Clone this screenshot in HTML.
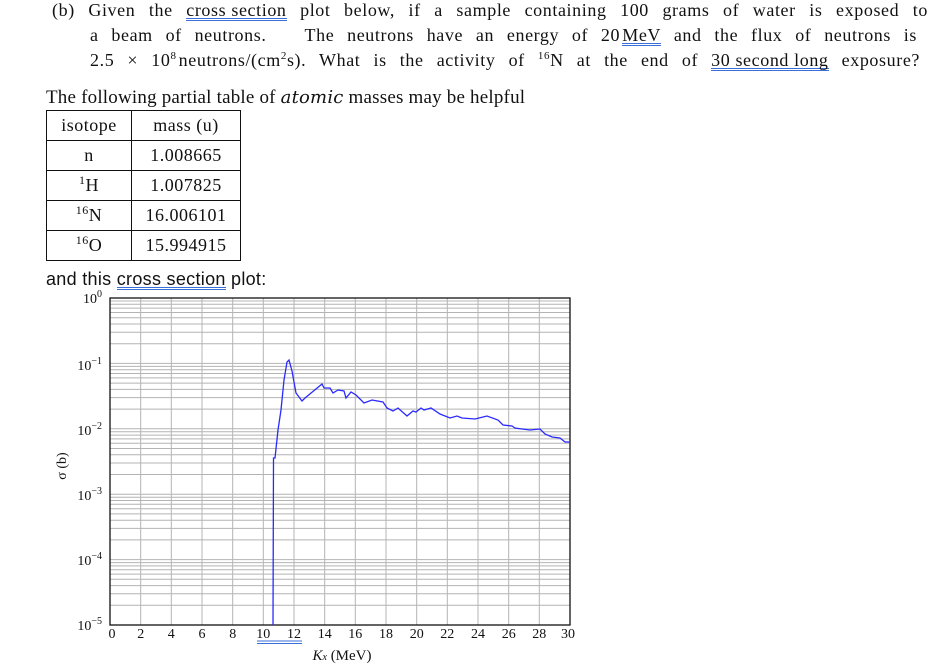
<!DOCTYPE html>
<html><head><meta charset="utf-8"><style>
body{margin:0;width:940px;height:671px;background:#fff;position:relative;overflow:hidden;font-family:"Liberation Serif",serif;color:#111}
.l{position:absolute;font-size:18px;letter-spacing:0.6px;white-space:nowrap;text-align:justify;text-align-last:justify;line-height:20px}
.u{border-bottom:3px double #3a6fd8;line-height:16px;display:inline-block}
sup{font-size:11px;vertical-align:7px;line-height:0}
table{position:absolute;left:46px;top:110px;border-collapse:collapse;font-size:18px;letter-spacing:0.5px}
td{border:1.5px solid #111;text-align:center;height:29px;padding:0}
</style></head><body>
<div class="l" style="left:52px;top:0;width:876px">(b) Given the <span class="u">cross section</span> plot below, if a sample containing 100 grams of water is exposed to</div>
<div class="l" style="left:90px;top:25px;width:827px">a beam of neutrons. &nbsp; The neutrons have an energy of 20&#8202;<span class="u">MeV</span> and the flux of neutrons is</div>
<div class="l" style="left:90px;top:50px;width:830px">2.5 × 10<sup>8</sup>&#8202;neutrons/(cm<sup>2</sup>s). What is the activity of <sup>16</sup>N at the end of <span class="u">30 second long</span> exposure?</div>
<div class="l" style="left:46px;top:88px;font-size:19px;letter-spacing:0.2px;text-align:left;text-align-last:left">The following partial table of <i style="font-family:'DejaVu Serif',serif;font-size:18px">atomic</i> masses may be helpful</div>
<table>
<tr><td style="width:84px">isotope</td><td style="width:108px">mass (u)</td></tr>
<tr><td>n</td><td>1.008665</td></tr>
<tr><td><sup style="font-size:12px">1</sup>H</td><td>1.007825</td></tr>
<tr><td><sup style="font-size:12px">16</sup>N</td><td>16.006101</td></tr>
<tr><td><sup style="font-size:12px">16</sup>O</td><td>15.994915</td></tr>
</table>
<div class="l" style="left:46px;top:269px;font-family:'Liberation Sans',sans-serif;letter-spacing:0.3px;text-align:left;text-align-last:left">and this <span class="u">cross section</span> plot:</div>
<svg width="940" height="671" style="position:absolute;left:0;top:0" font-family="Liberation Serif,serif">
<path fill="none" stroke="#b4b4b4" stroke-width="1" d="M140.7 298V625M171.3 298V625M202 298V625M232.7 298V625M263.3 298V625M294 298V625M324.7 298V625M355.3 298V625M386 298V625M416.7 298V625M447.3 298V625M478 298V625M508.7 298V625M539.3 298V625
M110 343.7H570M110 332.2H570M110 324H570M110 317.7H570M110 312.5H570M110 308.1H570M110 304.3H570M110 301H570M110 363.4H570
M110 409.1H570M110 397.6H570M110 389.4H570M110 383.1H570M110 377.9H570M110 373.5H570M110 369.7H570M110 366.4H570M110 428.8H570
M110 474.5H570M110 463H570M110 454.8H570M110 448.5H570M110 443.3H570M110 438.9H570M110 435.1H570M110 431.8H570M110 494.2H570
M110 539.9H570M110 528.4H570M110 520.2H570M110 513.9H570M110 508.7H570M110 504.3H570M110 500.5H570M110 497.2H570M110 559.6H570
M110 605.3H570M110 593.8H570M110 585.6H570M110 579.3H570M110 574.1H570M110 569.7H570M110 565.9H570M110 562.6H570"/>
<rect x="110" y="298" width="460" height="327" fill="none" stroke="#111" stroke-width="1.3"/>
<polyline fill="none" stroke="#2a2aff" stroke-width="1.3" points="273,625 273.5,458 275,458 278,430 281,410 284,380 287,362 289,360 292,371 296,393 302,401 305,398 322,384 324,388 330,388 333,393 338,390 344,391 346,398 351,392 356,395 364,403 372,400 383,402 387,408 393,411 398,408 407,416 413,411 416,412 421,408 424,410 431,408 440,414 450,418 457,416 462,418 475,419 487,416 498,420 503,425 512,426 515,428 522,429 530,430 540,429 545,434 552,437 560,438 565,442 570,442"/>
<g font-size="14" text-anchor="end" fill="#111">
<text x="102" y="303">10<tspan font-size="10" dy="-6">0</tspan></text>
<text x="102" y="370">10<tspan font-size="10" dy="-6">−1</tspan></text>
<text x="102" y="435">10<tspan font-size="10" dy="-6">−2</tspan></text>
<text x="102" y="500">10<tspan font-size="10" dy="-6">−3</tspan></text>
<text x="102" y="565">10<tspan font-size="10" dy="-6">−4</tspan></text>
<text x="102" y="630">10<tspan font-size="10" dy="-6">−5</tspan></text>
</g>
<g font-size="14" text-anchor="middle" fill="#111">
<text x="112" y="638">0</text><text x="140.7" y="638">2</text><text x="171.3" y="638">4</text><text x="202" y="638">6</text><text x="232.7" y="638">8</text><text x="263.3" y="638">10</text><text x="294" y="638">12</text><text x="324.7" y="638">14</text><text x="355.3" y="638">16</text><text x="386" y="638">18</text><text x="416.7" y="638">20</text><text x="447.3" y="638">22</text><text x="478" y="638">24</text><text x="508.7" y="638">26</text><text x="539.3" y="638">28</text><text x="568" y="638">30</text>
</g>
<line x1="257" y1="641" x2="302" y2="641" stroke="#3a6fd8" stroke-width="1"/>
<line x1="257" y1="643.5" x2="302" y2="643.5" stroke="#3a6fd8" stroke-width="1"/>
<text x="342" y="660" font-size="15" text-anchor="middle" fill="#111"><tspan font-style="italic">K<tspan font-size="10">x</tspan></tspan> (MeV)</text>
<text transform="translate(66,466) rotate(-90)" font-size="14" text-anchor="middle" fill="#111">σ (b)</text>
</svg>
</body></html>
